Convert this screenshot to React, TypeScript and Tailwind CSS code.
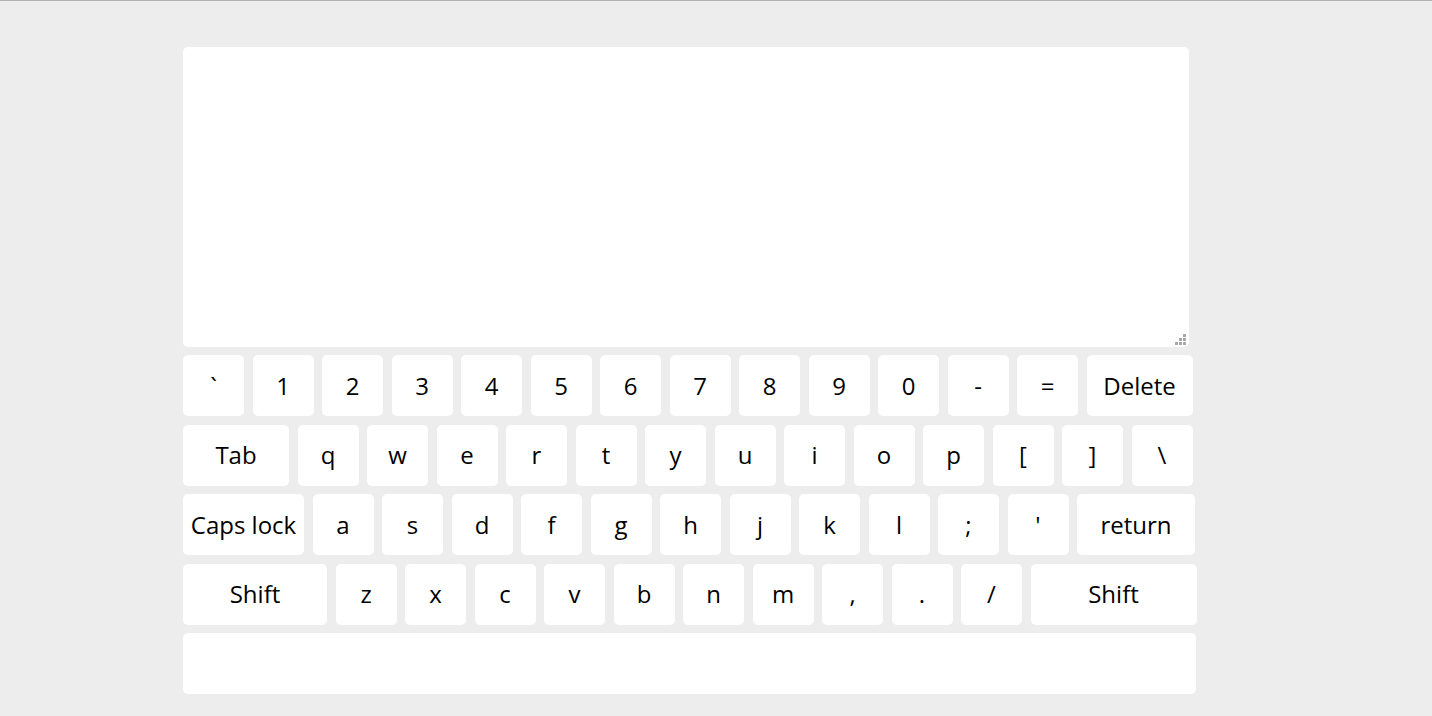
import React from "react";

type K = { label: string; w?: number };

const rows: K[][] = [
  [
    { label: "`" }, { label: "1" }, { label: "2" }, { label: "3" }, { label: "4" }, { label: "5" },
    { label: "6" }, { label: "7" }, { label: "8" }, { label: "9" }, { label: "0" }, { label: "-" },
    { label: "=" }, { label: "Delete", w: 106 },
  ],
  [
    { label: "Tab", w: 106 }, { label: "q" }, { label: "w" }, { label: "e" }, { label: "r" }, { label: "t" },
    { label: "y" }, { label: "u" }, { label: "i" }, { label: "o" }, { label: "p" }, { label: "[" },
    { label: "]" }, { label: "\\" },
  ],
  [
    { label: "Caps lock", w: 121 }, { label: "a" }, { label: "s" }, { label: "d" }, { label: "f" },
    { label: "g" }, { label: "h" }, { label: "j" }, { label: "k" }, { label: "l" }, { label: ";" },
    { label: "'" }, { label: "return", w: 118 },
  ],
  [
    { label: "Shift", w: 144 }, { label: "z" }, { label: "x" }, { label: "c" }, { label: "v" },
    { label: "b" }, { label: "n" }, { label: "m" }, { label: "," }, { label: "." }, { label: "/" },
    { label: "Shift", w: 166 },
  ],
];

function Key({ k }: { k: K }) {
  return (
    <div
      className="h-[61px] shrink-0 rounded-[5px] bg-white flex items-center justify-center text-[24px] text-black"
      style={{ width: k.w ?? 61 }}
    >
      {k.label}
    </div>
  );
}

export default function App() {
  return (
    <div
      className="min-h-[716px] w-full bg-[#ededed] border-t border-[#b3b3b3]"
      style={{ fontFamily: '"Open Sans", "Noto Sans", sans-serif' }}
    >
      <div className="pl-[183px] pt-[46px] flex flex-col gap-[8.5px]">
        <div className="relative w-[1006px] h-[299.5px]">
          <textarea className="block w-full h-full resize-none rounded-[5px] bg-white outline-none border-0 p-2" />
          <svg
            className="absolute right-[3px] bottom-[2px]"
            width="11"
            height="11"
            viewBox="0 0 11 11"
          >
            <rect x="8" y="0" width="3" height="3" fill="#a8a8a8" />
            <rect x="4" y="4" width="3" height="3" fill="#a8a8a8" />
            <rect x="8" y="4" width="3" height="3" fill="#a8a8a8" />
            <rect x="0" y="8" width="3" height="3" fill="#a8a8a8" />
            <rect x="4" y="8" width="3" height="3" fill="#a8a8a8" />
            <rect x="8" y="8" width="3" height="3" fill="#a8a8a8" />
          </svg>
        </div>
        {rows.map((r, i) => (
          <div key={i} className="flex gap-[8.5px]">
            {r.map((k, j) => (
              <Key key={j} k={k} />
            ))}
          </div>
        ))}
        <div className="h-[61px] w-[1013px] rounded-[5px] bg-white" />
      </div>
    </div>
  );
}
